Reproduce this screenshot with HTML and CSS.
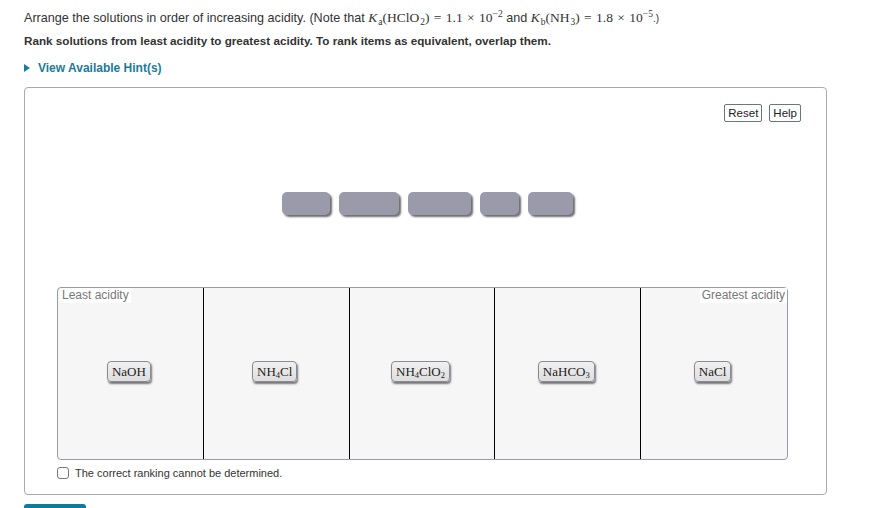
FILE: index.html
```html
<!DOCTYPE html>
<html>
<head>
<meta charset="utf-8">
<link rel="stylesheet" href="styles.css">
</head>
<body>
<div class="page">
  <p class="intro">Arrange the solutions in order of increasing acidity. (Note that <span class="m"><i>K</i><sub>a</sub>(HClO<sub>2</sub>) = 1.1 × 10<sup>−2</sup></span> and <span class="m"><i>K</i><sub>b</sub>(NH<sub>3</sub>) = 1.8 × 10<sup>−5</sup></span><span class="small">.)</span></p>
  <p class="rank">Rank solutions from least acidity to greatest acidity. To rank items as equivalent, overlap them.</p>
  <p class="hint"><span class="tri"></span>View Available Hint(s)</p>
  <div class="box">
    <div class="tools">
      <button class="btn">Reset</button>
      <button class="btn">Help</button>
    </div>
    <div class="tiles">
      <span class="tile w1"></span>
      <span class="tile w2"></span>
      <span class="tile w3"></span>
      <span class="tile w4"></span>
      <span class="tile w5"></span>
    </div>
    <div class="rankarea">
      <span class="lab lab-l">Least acidity</span>
      <span class="lab lab-r">Greatest acidity</span>
      <div class="col"><span class="item">NaOH</span></div>
      <div class="col"><span class="item">NH<sub>4</sub>Cl</span></div>
      <div class="col"><span class="item">NH<sub>4</sub>ClO<sub>2</sub></span></div>
      <div class="col"><span class="item">NaHCO<sub>3</sub></span></div>
      <div class="col"><span class="item">NaCl</span></div>
    </div>
    <label class="chk"><span class="cb"></span>The correct ranking cannot be determined.</label>
  </div>
  <div class="bar"></div>
</div>
</body>
</html>
```
FILE: styles.css
```css
* { box-sizing: border-box; }
body {
  margin: 0;
  font-family: "Liberation Sans", Arial, sans-serif;
  color: #333;
  background: #fff;
}
.page {
  padding: 8px 24px 0 24px;
  width: 893px;
  height: 508px;
  overflow: hidden;
}
p { margin: 0; }
.intro {
  font-size: 12.6px;
  line-height: 20px;
  height: 20px;
  white-space: nowrap;
}
.m {
  font-family: "Liberation Serif", "Times New Roman", serif;
  font-size: 13.5px;
  word-spacing: 1px;
}
.m sub, .m sup { font-size: 9.5px; line-height: 0; }
.m sub { vertical-align: -3px; margin-left: 1px; }
.m sup { vertical-align: 5px; }
.small { font-size: 10px; }
.rank {
  margin-top: 5px;
  font-size: 11.7px;
  font-weight: bold;
  line-height: 16px;
}
.hint {
  margin-top: 11px;
  font-size: 12px;
  font-weight: bold;
  color: #1a7b9c;
  line-height: 16px;
  display: flex;
  align-items: center;
}
.tri {
  width: 0; height: 0;
  border-left: 6px solid #1a7b9c;
  border-top: 4px solid transparent;
  border-bottom: 4px solid transparent;
  margin-right: 8px;
}
.box {
  margin-top: 11px;
  width: 803px;
  border: 1px solid #aaa;
  border-radius: 4px;
  height: 408px;
  padding: 16px 25px 0 32px;
}
.tools {
  display: flex;
  justify-content: flex-end;
  gap: 7px;
}
.btn {
  font-family: "Liberation Sans", Arial, sans-serif;
  font-size: 11.5px;
  padding: 1px 3px;
  height: 18px;
  line-height: 14px;
  background: #fff;
  color: #222;
  border: 1px solid #667780;
  border-radius: 2px;
}
.tiles {
  margin-top: 70px;
  display: flex;
  justify-content: center;
  gap: 9px;
  padding-right: 4px;
}
.tile {
  height: 23px;
  background: #9b9aab;
  border-radius: 5px;
  box-shadow: 2px 2px 2px #6d6d6d;
}
.w1 { width: 48px; }
.w2 { width: 60px; }
.w3 { width: 63px; }
.w4 { width: 39px; }
.w5 { width: 45px; }
.rankarea {
  position: relative;
  margin-top: 72px;
  margin-right: 13px;
  height: 173px;
  background: #f6f6f6;
  border: 1px solid #9b9aa8;
  border-radius: 4px;
  display: grid;
  grid-template-columns: repeat(5, 1fr);
}
.col {
  border-right: 1px solid #000;
  display: flex;
  align-items: center;
  justify-content: center;
  padding-right: 3px;
  padding-bottom: 4px;
}
.col:last-of-type { border-right: none; }
.lab {
  position: absolute;
  top: 0;
  background: #fff;
  color: #777;
  font-size: 12px;
  line-height: 14px;
  padding: 0 2px 1px 2px;
}
.lab-l { left: 2px; }
.lab-r { right: 0; }
.item {
  font-family: "Liberation Serif", "Times New Roman", serif;
  font-size: 13px;
  color: #222;
  background: linear-gradient(#f0f0f0, #dedede);
  border: 1px solid #8a8a96;
  border-radius: 4px;
  box-shadow: 1px 2px 2px #777;
  padding: 3px 4px 3px 4px;
  line-height: 13px;
}
.item sub { font-size: 8.5px; line-height: 0; vertical-align: -2px; }
.chk {
  display: flex;
  align-items: center;
  margin-top: 6px;
  font-size: 11px;
  color: #333;
  line-height: 14px;
}
.cb {
  width: 12px; height: 12px;
  border: 1px solid #777;
  border-radius: 3px;
  margin-right: 6px;
  background: #fff;
}
.bar {
  margin-top: 9px;
  width: 62px;
  height: 6px;
  background: #0f7a99;
  border-radius: 3px 3px 0 0;
}
```
